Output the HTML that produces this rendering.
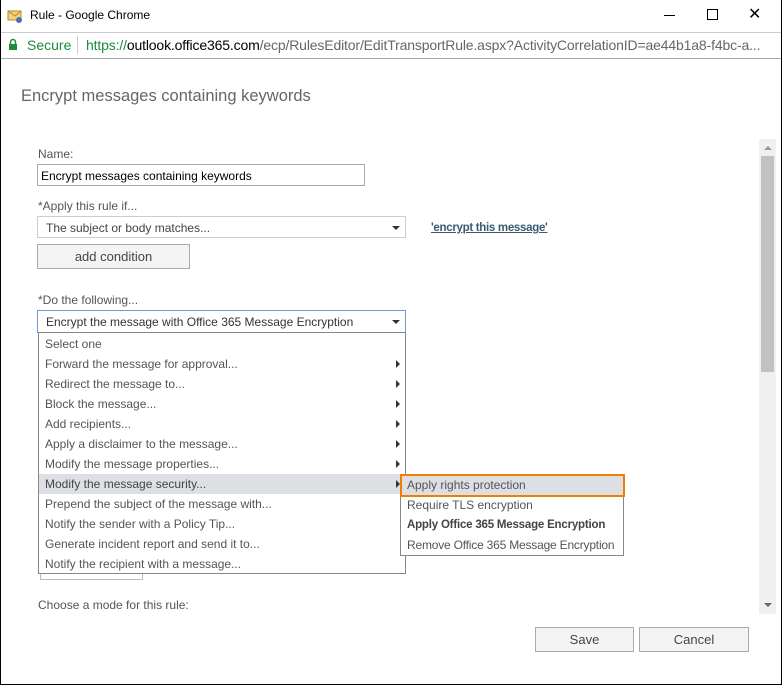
<!DOCTYPE html>
<html><head><style>
*{box-sizing:border-box;margin:0;padding:0}
body{width:782px;height:685px;overflow:hidden;background:#fff;font-family:"Liberation Sans",sans-serif;position:relative}
.a{position:absolute;white-space:nowrap}
.t{font-size:12px;color:#555}
.box{position:absolute;border:1px solid #aaa;background:#fff}
.row{position:absolute;left:0;width:366px;height:20px;font-size:12px;color:#555;padding-left:6px;line-height:20px}
.row .ar{position:absolute;right:5px;top:6px;width:0;height:0;border-left:4px solid #333;border-top:4px solid transparent;border-bottom:4px solid transparent}
.dd{position:absolute;right:5px;width:0;height:0;border-top:4px solid #333;border-left:4px solid transparent;border-right:4px solid transparent}
.btn{position:absolute;background:#f4f4f4;border:1px solid #aaa;font-size:13px;color:#444;text-align:center}
</style></head><body>
<div class="a" style="left:0;top:0;width:1px;height:685px;background:#000"></div>
<div class="a" style="left:781px;top:0;width:1px;height:685px;background:#000"></div>
<svg class="a" style="left:7px;top:8px" width="17" height="16"><rect x="1" y="3" width="13" height="9" fill="#f4d27a" stroke="#b08a30"/><path d="M1 3l7 5 6-5" stroke="#b08a30" fill="none"/><circle cx="12" cy="12" r="3" fill="#4a6fb5"/></svg>
<div class="a" style="left:30px;top:8px;font-size:12px;color:#000">Rule - Google Chrome</div>
<div class="a" style="left:664px;top:15px;width:11px;height:1px;background:#000"></div>
<div class="a" style="left:707px;top:9px;width:11px;height:11px;border:1px solid #000"></div>
<div class="a" style="left:748px;top:4px;font-size:16px;color:#000">✕</div>
<div class="a" style="left:1px;top:32px;width:780px;height:1px;background:#ccc"></div>
<svg class="a" style="left:8px;top:38px" width="10" height="13"><path d="M2.5 6V4a2.5 2.5 0 015 0v2" stroke="#1e8a3c" stroke-width="1.5" fill="none"/><rect x="1" y="6" width="8" height="6" fill="#1e8a3c"/></svg>
<div class="a" style="left:27px;top:37px;font-size:14px;color:#1e8a3c">Secure</div>
<div class="a" style="left:77px;top:36px;width:1px;height:18px;background:#ccc"></div>
<div class="a" style="left:86px;top:37px;font-size:14px;color:#1e8a3c;letter-spacing:-0.15px"><span>https://</span><span style="color:#000">outlook.office365.com</span><span style="color:#666">/ecp/RulesEditor/EditTransportRule.aspx?ActivityCorrelationID=ae44b1a8-f4bc-a...</span></div>
<div class="a" style="left:1px;top:58px;width:780px;height:1px;background:#aaa"></div>
<div class="a" style="left:21px;top:87px;font-size:16.5px;color:#666">Encrypt messages containing keywords</div>
<div class="a t" style="left:38px;top:147px">Name:</div>
<div class="box" style="left:37px;top:164px;width:328px;height:22px"></div>
<div class="a" style="left:41px;top:169px;font-size:12px;color:#000">Encrypt messages containing keywords</div>
<div class="a t" style="left:38px;top:199px">*Apply this rule if...</div>
<div class="box" style="left:37px;top:216px;width:369px;height:22px;border-color:#ccc"><div class="dd" style="top:9px"></div></div>
<div class="a t" style="left:46px;top:221px;color:#444">The subject or body matches...</div>
<div class="a" style="left:431px;top:222px;font-size:11.5px;color:#3a5a70;text-decoration:underline;font-weight:bold;letter-spacing:-0.3px">'encrypt this message'</div>
<div class="btn" style="left:37px;top:244px;width:153px;height:25px;line-height:23px">add condition</div>
<div class="a t" style="left:38px;top:293px">*Do the following...</div>
<div class="box" style="left:37px;top:310px;width:369px;height:23px;border-color:#6a9ad8"><div class="dd" style="top:9px"></div></div>
<div class="a" style="left:46px;top:315px;font-size:12px;color:#333">Encrypt the message with Office 365 Message Encryption</div>
<div class="box" style="left:38px;top:332px;width:368px;height:242px;border-color:#888">
<div class="row" style="top:1px">Select one</div>
<div class="row" style="top:21px">Forward the message for approval...<i class="ar"></i></div>
<div class="row" style="top:41px">Redirect the message to...<i class="ar"></i></div>
<div class="row" style="top:61px">Block the message...<i class="ar"></i></div>
<div class="row" style="top:81px">Add recipients...<i class="ar"></i></div>
<div class="row" style="top:101px">Apply a disclaimer to the message...<i class="ar"></i></div>
<div class="row" style="top:121px">Modify the message properties...<i class="ar"></i></div>
<div class="row" style="top:141px;background:#dcdfe4;color:#444">Modify the message security...<i class="ar"></i></div>
<div class="row" style="top:161px">Prepend the subject of the message with...</div>
<div class="row" style="top:181px">Notify the sender with a Policy Tip...</div>
<div class="row" style="top:201px">Generate incident report and send it to...</div>
<div class="row" style="top:221px">Notify the recipient with a message...</div>
</div>
<div class="box" style="left:400px;top:474px;width:224px;height:82px;border-color:#888"></div>
<div class="a" style="left:400px;top:474px;width:225px;height:23px;background:#dcdfe4;border:2px solid #f57c00"></div>
<div class="a t" style="left:407px;top:478px">Apply rights protection</div>
<div class="a t" style="left:407px;top:498px">Require TLS encryption</div>
<div class="a t" style="left:407px;top:519px;font-weight:bold;color:#444;font-size:11.5px;letter-spacing:-0.2px">Apply Office 365 Message Encryption</div>
<div class="a t" style="left:407px;top:538px;letter-spacing:-0.2px">Remove Office 365 Message Encryption</div>
<div class="a" style="left:40px;top:574px;width:103px;height:6px;border:1px solid #bbb;border-top:none"></div>
<div class="a t" style="left:38px;top:598px">Choose a mode for this rule:</div>
<div class="a" style="left:759px;top:139px;width:17px;height:475px;background:#f0f0f0"></div>
<div class="a" style="left:761px;top:156px;width:13px;height:216px;background:#c1c1c1"></div>
<div class="a" style="left:764px;top:146px;border-bottom:4px solid #999;border-left:4px solid transparent;border-right:4px solid transparent"></div>
<div class="a" style="left:764px;top:603px;border-top:4px solid #666;border-left:4px solid transparent;border-right:4px solid transparent"></div>
<div class="btn" style="left:535px;top:627px;width:99px;height:25px;line-height:23px">Save</div>
<div class="btn" style="left:639px;top:627px;width:110px;height:25px;line-height:23px">Cancel</div>
<div class="a" style="left:0;top:684px;width:782px;height:1px;background:#000"></div>
</body></html>
